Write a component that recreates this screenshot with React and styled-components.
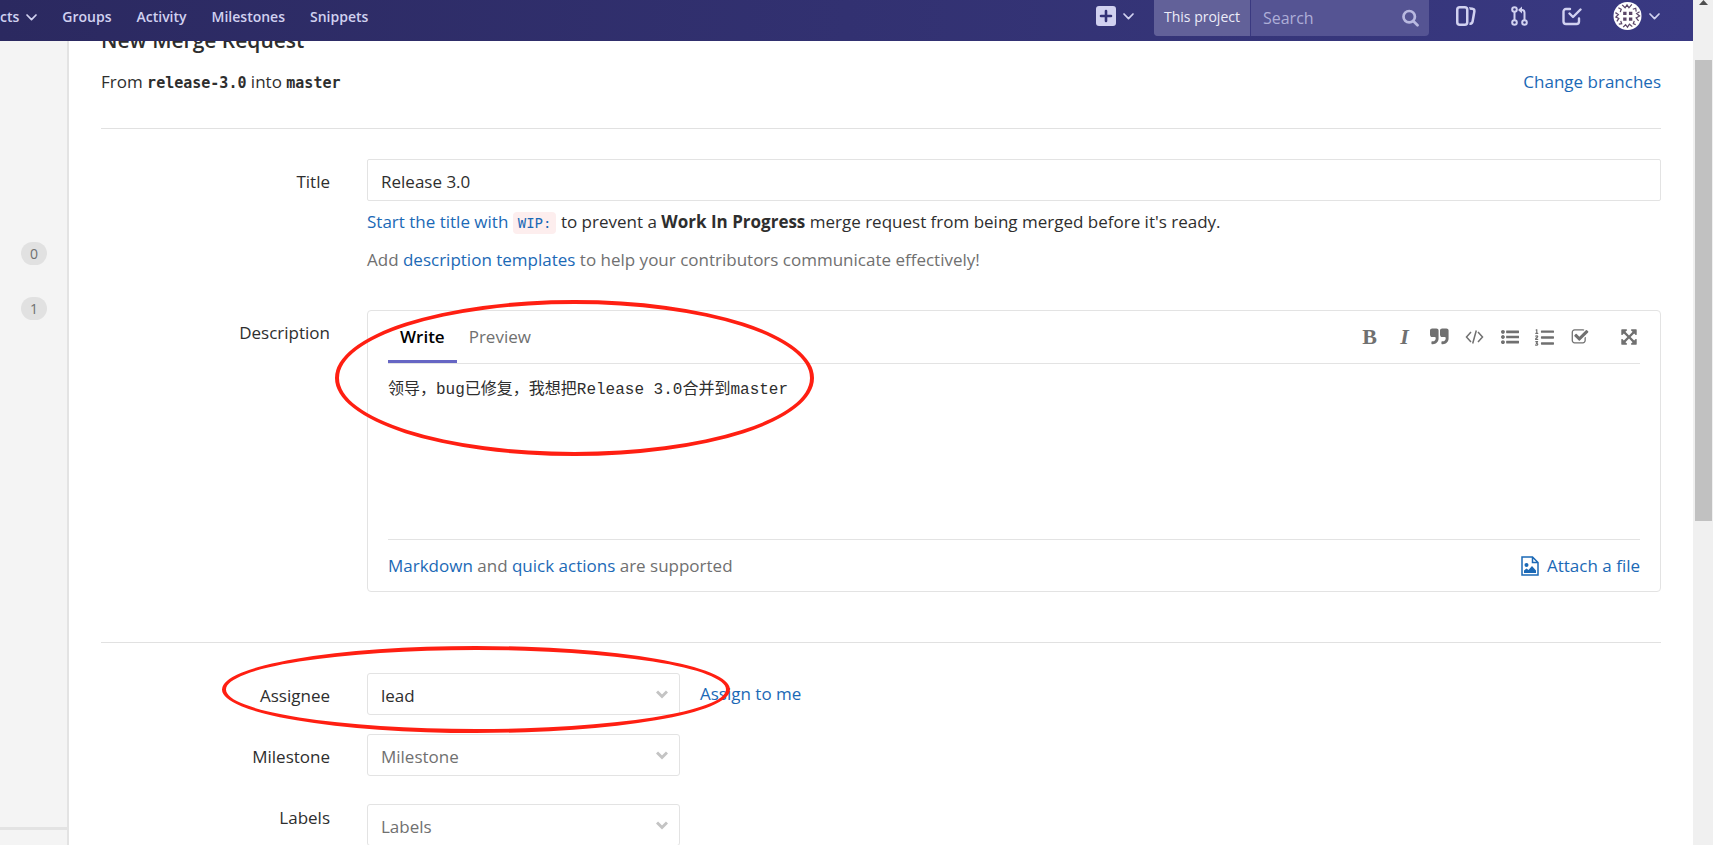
import React, { useState } from "react";
import { FaListOl } from "react-icons/fa";

// Styles
import styled, { createGlobalStyle } from "styled-components";

const sans = `"Open Sans", "Noto Sans", "Noto Sans CJK SC", sans-serif`;
const mono = `"DejaVu Sans Mono", "Noto Sans CJK SC", monospace`;

const GlobalStyle = createGlobalStyle`
  * {
    box-sizing: border-box;
  }
  body {
    margin: 0;
    background: #fff;
    color: #2e2e2e;
    font-family: ${sans};
    font-size: 17px;
    line-height: 24px;
  }
  a {
    color: #1b69b6;
    text-decoration: none;
  }
  button {
    padding: 0;
    border: 0;
    background: none;
    color: inherit;
    font: inherit;
    cursor: pointer;
  }
`;

const Viewport = styled.div`
  display: flex;
  height: 100vh;
  overflow: hidden;
`;

const Page = styled.div`
  flex: 1;
  min-width: 0;
  display: flex;
  flex-direction: column;
`;

const ScrollTrack = styled.div`
  width: 20px;
  padding: 0 1px 0 2px;
  background: #f0f0f0;

  svg {
    display: block;
    width: 17px;
    height: 60px;
  }
`;

const ScrollThumb = styled.div`
  height: 461px;
  background: #c1c1c1;
`;

// Navbar
const Navbar = styled.header`
  display: flex;
  justify-content: space-between;
  flex: none;
  height: 41px;
  padding: 0 33px 0 0;
  background: linear-gradient(to right, #2b2960, #393982);
  color: #d1d1f0;
`;

const NavLinks = styled.nav`
  display: flex;
  gap: 25px;
  height: 34px;
  align-items: center;
  font-size: 14px;
  font-weight: 600;

  a {
    display: flex;
    align-items: center;
    gap: 7px;
    color: inherit;
  }
`;

const NavTools = styled.div`
  display: flex;
  align-items: flex-start;
`;

const NavButton = styled.button`
  display: flex;
  align-items: center;
  gap: 7px;
  height: 32px;
  margin-left: ${(props) => props.$gap || 0}px;

  svg {
    display: block;
  }
`;

const SearchForm = styled.form`
  display: flex;
  align-items: center;
  width: 275px;
  height: 36px;
  margin-left: 20px;
  padding-right: 10px;
  border-radius: 0 0 4px 4px;
  background: #555493;
  overflow: hidden;
`;

const SearchScope = styled.span`
  display: flex;
  align-items: center;
  height: 36px;
  padding: 0 10px 2px;
  border-right: 1px solid #3a3980;
  background: #626199;
  color: #ececf8;
  font-size: 14px;
  white-space: nowrap;
`;

const SearchInput = styled.input`
  flex: 1;
  min-width: 0;
  padding: 0 12px;
  border: 0;
  outline: 0;
  background: none;
  color: #fff;
  font-family: inherit;
  font-size: 16px;

  &::placeholder {
    color: #aeaed8;
  }
`;

// Body
const Body = styled.div`
  flex: 1;
  min-height: 0;
  display: flex;
`;

const Sidebar = styled.aside`
  flex: none;
  display: flex;
  flex-direction: column;
  justify-content: space-between;
  width: 69px;
  border-right: 2px solid #e3e3e3;
  background: #f4f4f4;
`;

const Counters = styled.div`
  display: flex;
  flex-direction: column;
  gap: 32px;
  padding: 201px 20px 0 21px;
`;

const Counter = styled.span`
  height: 23px;
  border-radius: 12px;
  background: #e1e1e1;
  color: #707070;
  font-size: 14px;
  line-height: 23px;
  text-align: center;
`;

const SidebarToggle = styled.button`
  height: 18px;
  border-top: 3px solid #e3e3e3;
`;

/* the page is scrolled, so the heading is partly under the navbar */
const Main = styled.main`
  flex: 1;
  min-width: 0;
  padding: 0 32px;
  overflow: hidden;
`;

const Heading = styled.h3`
  margin: -17px 0 0;
  font-size: 21px;
  font-weight: 600;
  line-height: 32px;
`;

const Branches = styled.div`
  display: flex;
  justify-content: space-between;
  padding: 14px 0 33px;
  border-bottom: 1px solid #e1e1e1;
  margin-bottom: 30px;

  code {
    font-family: ${mono};
    font-size: 15px;
    font-weight: 700;
  }
`;

const Row = styled.div`
  position: relative;
  display: grid;
  grid-template-columns: 229px minmax(0, 1fr);
  column-gap: 37px;
  margin-bottom: ${(props) => props.$gap || 0}px;
`;

const Label = styled.label`
  padding-top: ${(props) => props.$top || 11}px;
  text-align: right;
`;

const TextInput = styled.input`
  display: block;
  width: 100%;
  height: 42px;
  padding: 2px 13px 0;
  border: 1px solid #e3e3e3;
  border-radius: 2px;
  color: #2e2e2e;
  font-family: inherit;
  font-size: 17px;
`;

const Hint = styled.p`
  margin: ${(props) => props.$top}px 0 0;
  color: ${(props) => (props.$muted ? "#707070" : "#2e2e2e")};

  code {
    padding: 3px 5px;
    border-radius: 4px;
    background: #fdeeee;
    font-family: ${mono};
    font-size: 14px;
  }
`;

// Editor
const Editor = styled.div`
  position: relative;
  padding: 0 20px;
  border: 1px solid #e3e3e3;
  border-radius: 4px;
`;

const EditorHeader = styled.div`
  display: flex;
  justify-content: space-between;
  height: 53px;
  border-bottom: 1px solid #e3e3e3;
`;

const Tab = styled.button`
  height: 52px;
  padding: 2px 12px 0;
  border-bottom: 3px solid ${(props) => (props.$active ? "#6666c4" : "transparent")};
  color: ${(props) => (props.$active ? "#000" : "#707070")};
  font-weight: ${(props) => (props.$active ? 600 : 400)};
`;

const Toolbar = styled.div`
  display: flex;
  align-items: center;
  color: #707070;
`;

const Tool = styled.button`
  display: flex;
  justify-content: center;
  width: 35px;

  b,
  i {
    font-family: "Liberation Serif", serif;
    font-size: 22px;
    font-weight: 700;
  }

  &:last-child {
    width: 18px;
    margin-left: 23px;
    margin-right: 2px;
  }
`;

const TextArea = styled.textarea`
  display: block;
  width: 100%;
  height: 176px;
  padding: 13px 0;
  border: 0;
  border-bottom: 1px solid #e3e3e3;
  outline: 0;
  resize: none;
  color: #2e2e2e;
  font-family: "Liberation Mono", "Noto Sans CJK SC", monospace;
  font-size: 16px;
  line-height: 26px;
`;

const EditorFooter = styled.div`
  display: flex;
  align-items: center;
  justify-content: space-between;
  height: 51px;
  color: #707070;
`;

const AttachButton = styled.button`
  display: flex;
  align-items: center;
  gap: 8px;
  color: #1b69b6;
`;

const Divider = styled.hr`
  margin: 50px 0 30px;
  border: 0;
  border-top: 1px solid #e1e1e1;
`;

const SelectLine = styled.div`
  display: flex;
  align-items: center;
  gap: 20px;
`;

const SelectBox = styled.span`
  position: relative;
  width: 313px;

  svg {
    position: absolute;
    top: 17px;
    right: 12px;
    pointer-events: none;
  }
`;

const Select = styled.select`
  appearance: none;
  display: block;
  width: 100%;
  height: 42px;
  padding: 2px 13px 0;
  border: 1px solid #e3e3e3;
  border-radius: 3px;
  background: #fff;
  color: ${(props) => (props.$filled ? "#2e2e2e" : "#707070")};
  font-family: inherit;
  font-size: 17px;
`;

// Red rings drawn over the form
const Ring = styled.span`
  position: absolute;
  top: ${(props) => props.$top}px;
  left: ${(props) => props.$left}px;
  width: ${(props) => props.$width}px;
  height: ${(props) => props.$height}px;
  border: 4px solid #ff1f12;
  border-radius: 50%;
  pointer-events: none;
`;

// Icons
const ChevronDown = () => (
  <svg width="11" height="7" viewBox="0 0 11 7" fill="none" stroke="currentColor" strokeWidth="1.7" strokeLinecap="round" strokeLinejoin="round">
    <path d="M1 1l4.500 4.700L10 1" />
  </svg>
);

const SelectArrow = () => (
  <svg width="12" height="9" viewBox="0 0 12 9" fill="none" stroke="#c4c4c4" strokeWidth="3">
    <path d="M1 1.500l5 5 5-5" />
  </svg>
);

const PlusIcon = () => (
  <svg width="20" height="20" viewBox="0 0 20 20">
    <rect width="20" height="20" rx="3" fill="#d1d1f0" />
    <path d="M10 5v10M5 10h10" stroke="#343277" strokeWidth="2.600" strokeLinecap="round" />
  </svg>
);

const SearchIcon = () => (
  <svg width="17" height="18" viewBox="0 0 17 18" fill="none" stroke="#b9b9e0" strokeWidth="2.700" strokeLinecap="round">
    <circle cx="7.200" cy="7.700" r="5.700" />
    <path d="M11.500 12.300l4 4" />
  </svg>
);

const IssuesIcon = () => (
  <svg width="20" height="20" viewBox="0 0 16 16" fill="currentColor">
    <path d="M10.458 15.012l.311.055a3 3 0 0 0 3.476-2.433l1.389-7.879A3 3 0 0 0 13.2 1.28L11.23.933a3.002 3.002 0 0 0-.824-.031c.364.59.58 1.28.593 2.02l1.854.328a1 1 0 0 1 .811 1.158l-1.389 7.879a1 1 0 0 1-1.158.81l-.118-.02a3.98 3.98 0 0 1-.541 1.935zM3 0h4a3 3 0 0 1 3 3v10a3 3 0 0 1-3 3H3a3 3 0 0 1-3-3V3a3 3 0 0 1 3-3zm0 2a1 1 0 0 0-1 1v10a1 1 0 0 0 1 1h4a1 1 0 0 0 1-1V3a1 1 0 0 0-1-1H3z" />
  </svg>
);

const MergeIcon = () => (
  <svg width="17" height="20" viewBox="0 0 17 20" fill="none" stroke="currentColor" strokeWidth="2">
    <circle cx="3.500" cy="3.500" r="2.300" />
    <circle cx="3.500" cy="16.500" r="2.300" />
    <circle cx="13.500" cy="16.500" r="2.300" />
    <path d="M3.500 6v8M13.500 14V6.500a2.500 2.500 0 0 0-2.500-2.500" />
    <path d="M11 .500v7L7 4z" fill="currentColor" stroke="none" />
  </svg>
);

const TodoIcon = () => (
  <svg width="20" height="20" viewBox="0 0 20 20" fill="none" stroke="currentColor" strokeWidth="2.400" strokeLinecap="round" strokeLinejoin="round">
    <path d="M8 3H4a2.500 2.500 0 0 0-2.500 2.500v10A2.500 2.500 0 0 0 4 18h10.500a2.500 2.500 0 0 0 2.500-2.500V12.500" />
    <path d="M7.500 7.500l3.500 3.500 7.500-7.500" />
  </svg>
);

const Avatar = () => (
  <svg width="29" height="28" viewBox="0 0 29 29">
    <circle cx="14.500" cy="14.500" r="14.500" fill="#fff" />
    <g fill="#5b4668">
      <path d="M10 10h3.500v3.500H10zM16 10h3.500v3.500H16zM10 16h3.500v3.500H10zM16 16h3.500v3.500H16z" />
    </g>
    <g fill="none" stroke="#5b4668" strokeWidth="1.300">
      <path d="M9 3l3 3 2-3 2 3 3-3.500M5 6l3 1.500-1 3M20 7.500l3-1 .500 3.500M2 11l3 2-2.500 2.500 3 1.500-2 3M27 10l-3 2 3 2.500-3.500 2 2.500 3M5.500 23l3-.500-1-3M23 23.500l-2.500-1 1-3M10 26l2.500-2.500 2 2.500 2-3 3 2.500" />
    </g>
  </svg>
);

const CodeIcon = () => (
  <svg width="19" height="14" viewBox="0 0 19 14" fill="none" stroke="currentColor" strokeWidth="1.500">
    <path d="M6 2L1.500 7 6 12M13 2l4.500 5-4.500 5M11.300.500l-3.600 13" />
  </svg>
);

const glyphs = {
  quote:
    "M768 320v704q0 104-40.5 198.5t-109.5 163.5-163.5 109.5-198.5 40.5h-64q-26 0-45-19t-19-45v-128q0-26 19-45t45-19h64q106 0 181-75t75-181v-32q0-40-28-68t-68-28h-224q-80 0-136-56t-56-136v-384q0-80 56-136t136-56h384q80 0 136 56t56 136zm896 0v704q0 104-40.5 198.5t-109.5 163.5-163.5 109.5-198.5 40.5h-64q-26 0-45-19t-19-45v-128q0-26 19-45t45-19h64q106 0 181-75t75-181v-32q0-40-28-68t-68-28h-224q-80 0-136-56t-56-136v-384q0-80 56-136t136-56h384q80 0 136 56t56 136z",
  list: "M384 1408q0 80-56 136t-136 56-136-56-56-136 56-136 136-56 136 56 56 136zm0-512q0 80-56 136t-136 56-136-56-56-136 56-136 136-56 136 56 56 136zm1408 416v192q0 13-9.5 22.5t-22.5 9.5h-1216q-13 0-22.5-9.5t-9.5-22.5v-192q0-13 9.5-22.5t22.5-9.5h1216q13 0 22.5 9.5t9.5 22.5zm-1408-928q0 80-56 136t-136 56-136-56-56-136 56-136 136-56 136 56 56 136zm1408 416v192q0 13-9.5 22.5t-22.5 9.5h-1216q-13 0-22.5-9.5t-9.5-22.5v-192q0-13 9.5-22.5t22.5-9.5h1216q13 0 22.5 9.5t9.5 22.5zm0-512v192q0 13-9.5 22.5t-22.5 9.5h-1216q-13 0-22.5-9.5t-9.5-22.5v-192q0-13 9.5-22.5t22.5-9.5h1216q13 0 22.5 9.5t9.5 22.5z",
  check:
    "M1472 930v318q0 119-84.5 203.5t-203.5 84.5h-832q-119 0-203.5-84.5t-84.5-203.5v-832q0-119 84.5-203.5t203.5-84.5h832q63 0 117 25 15 7 18 23 3 17-9 29l-49 49q-10 10-23 10-3 0-9-2-23-6-45-6h-832q-66 0-113 47t-47 113v832q0 66 47 113t113 47h832q66 0 113-47t47-113v-254q0-13 9-22l64-64q10-10 23-10 6 0 12 3 20 8 20 29zm231-489l-814 814q-24 24-57 24t-57-24l-430-430q-24-24-24-57t24-57l110-110q24-24 57-24t57 24l263 263 647-647q24-24 57-24t57 24l110 110q24 24 24 57t-24 57z",
  expand:
    "M1411 541l-355 355 355 355 144-144q29-31 70-14 39 17 39 59v448q0 26-19 45t-45 19h-448q-42 0-59-40-17-39 14-69l144-144-355-355-355 355 144 144q31 30 14 69-17 40-59 40h-448q-26 0-45-19t-19-45v-448q0-42 40-59 39-17 69 14l144 144 355-355-355-355-144 144q-19 19-45 19-12 0-24-5-40-17-40-59v-448q0-26 19-45t45-19h448q42 0 59 40 17 39-14 69l-144 144 355 355 355-355-144-144q-31-30-14-69 17-40 59-40h448q26 0 45 19t19 45v448q0 42-39 59-13 5-25 5-26 0-45-19z",
};

const Glyph = ({ name, size = 18 }) => (
  <svg width={size} height={size} viewBox="0 0 1792 1792" fill="currentColor">
    <path d={glyphs[name]} />
  </svg>
);

const FileIcon = () => (
  <svg width="18" height="20" viewBox="0 0 18 20" fill="none" stroke="currentColor" strokeWidth="1.500">
    <path d="M1 1h10.500L17 6.500V19H1zM11.500 1v5.500H17" />
    <circle cx="5.500" cy="9" r="2" fill="currentColor" stroke="none" />
    <path d="M3 17v-2.500l2.500-2 2 1.500 3.500-4 4 4.500V17z" fill="currentColor" stroke="none" />
  </svg>
);

const tools = [
  { label: "Add bold text", icon: <b>B</b> },
  { label: "Add italic text", icon: <i>I</i> },
  { label: "Insert a quote", icon: <Glyph name="quote" size={20} /> },
  { label: "Insert code", icon: <CodeIcon /> },
  { label: "Add a bullet list", icon: <Glyph name="list" /> },
  { label: "Add a numbered list", icon: <FaListOl size={19} /> },
  { label: "Add a task list", icon: <Glyph name="check" /> },
  { label: "Go full screen", icon: <Glyph name="expand" size={20} /> },
];

const navLinks = ["Groups", "Activity", "Milestones", "Snippets"];

const Dropdown = ({ id, value, filled }) => (
  <SelectBox>
    <Select id={id} $filled={filled} defaultValue={value}>
      <option value={value}>{value}</option>
    </Select>
    <SelectArrow />
  </SelectBox>
);

const App = () => {
  // State
  const [tab, setTab] = useState("Write");
  const [title, setTitle] = useState("Release 3.0");
  const [description, setDescription] = useState(
    "领导，bug已修复，我想把Release 3.0合并到master"
  );

  return (
    <Viewport>
      <GlobalStyle />
      <Page>
        <Navbar>
          <NavLinks>
            <a href="#projects">
              cts <ChevronDown />
            </a>
            {navLinks.map((link) => (
              <a key={link} href={`#${link.toLowerCase()}`}>
                {link}
              </a>
            ))}
          </NavLinks>
          <NavTools>
            <NavButton aria-label="New">
              <PlusIcon />
              <ChevronDown />
            </NavButton>
            <SearchForm>
              <SearchScope>This project</SearchScope>
              <SearchInput type="text" placeholder="Search" aria-label="Search" />
              <SearchIcon />
            </SearchForm>
            <NavButton $gap={27} aria-label="Issues">
              <IssuesIcon />
            </NavButton>
            <NavButton $gap={35} aria-label="Merge requests">
              <MergeIcon />
            </NavButton>
            <NavButton $gap={34} aria-label="Todos">
              <TodoIcon />
            </NavButton>
            <NavButton $gap={31} aria-label="User menu">
              <Avatar />
              <ChevronDown />
            </NavButton>
          </NavTools>
        </Navbar>

        <Body>
          <Sidebar>
            <Counters>
              <Counter>0</Counter>
              <Counter>1</Counter>
            </Counters>
            <SidebarToggle aria-label="Toggle sidebar" />
          </Sidebar>

          <Main>
            <Heading>New Merge Request</Heading>
            <Branches>
              <span>
                From <code>release-3.0</code> into <code>master</code>
              </span>
              <a href="#branches">Change branches</a>
            </Branches>

            <Row $gap={38}>
              <Label htmlFor="title">Title</Label>
              <div>
                <TextInput id="title" value={title} onChange={(e) => setTitle(e.target.value)} />
                <Hint $top={9}>
                  <a href="#wip">
                    Start the title with <code>WIP:</code>
                  </a>{" "}
                  to prevent a <strong>Work In Progress</strong> merge request from being merged
                  before it's ready.
                </Hint>
                <Hint $top={13} $muted>
                  Add <a href="#templates">description templates</a> to help your contributors
                  communicate effectively!
                </Hint>
              </div>
            </Row>

            <Row>
              <Label htmlFor="description">Description</Label>
              <Editor>
                <EditorHeader>
                  <div>
                    {["Write", "Preview"].map((name) => (
                      <Tab key={name} $active={tab === name} onClick={() => setTab(name)}>
                        {name}
                      </Tab>
                    ))}
                  </div>
                  <Toolbar>
                    {tools.map((tool) => (
                      <Tool key={tool.label} aria-label={tool.label}>
                        {tool.icon}
                      </Tool>
                    ))}
                  </Toolbar>
                </EditorHeader>
                <TextArea
                  id="description"
                  spellCheck={false}
                  value={description}
                  onChange={(e) => setDescription(e.target.value)}
                />
                <EditorFooter>
                  <span>
                    <a href="#markdown">Markdown</a> and <a href="#quick-actions">quick actions</a>{" "}
                    are supported
                  </span>
                  <AttachButton>
                    <FileIcon />
                    Attach a file
                  </AttachButton>
                </EditorFooter>
                <Ring $top={-11} $left={-33} $width={479} $height={156} />
              </Editor>
            </Row>

            <Divider />

            <Row $gap={19}>
              <Label htmlFor="assignee">Assignee</Label>
              <SelectLine>
                <Dropdown id="assignee" value="lead" filled />
                <a href="#assign">Assign to me</a>
              </SelectLine>
              <Ring $top={-27} $left={121} $width={508} $height={87} />
            </Row>
            <Row $gap={28}>
              <Label htmlFor="milestone">Milestone</Label>
              <Dropdown id="milestone" value="Milestone" />
            </Row>
            <Row>
              <Label htmlFor="labels" $top={2}>
                Labels
              </Label>
              <Dropdown id="labels" value="Labels" />
            </Row>
          </Main>
        </Body>
      </Page>

      <ScrollTrack>
        <svg viewBox="0 0 17 60">
          <path d="M4 5l4.500-5L13 5z" fill="#505050" />
        </svg>
        <ScrollThumb />
      </ScrollTrack>
    </Viewport>
  );
};

export default App;
